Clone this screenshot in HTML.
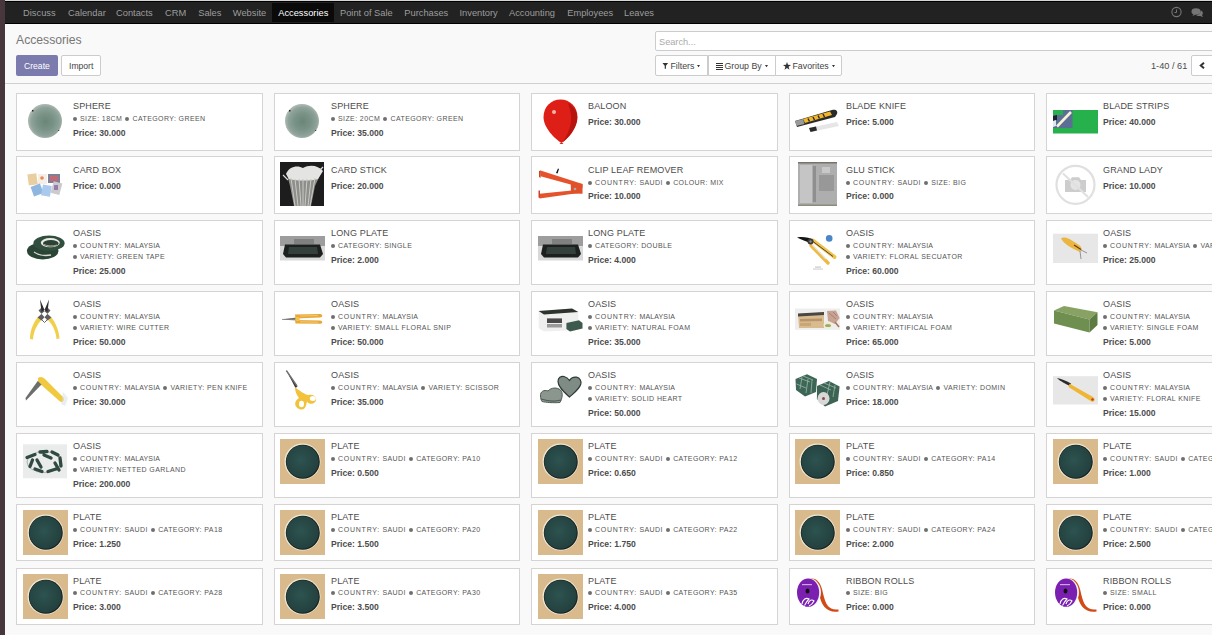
<!DOCTYPE html><html><head><meta charset="utf-8"><style>
*{margin:0;padding:0;box-sizing:border-box}
html,body{width:1212px;height:635px;overflow:hidden;background:#f9f9f9;font-family:"Liberation Sans", sans-serif;position:relative}
.a{position:absolute;white-space:nowrap}
.nav{position:absolute;left:5px;top:1px;width:1207px;height:23px;background:#222;border-top:1px solid #000;border-bottom:1px solid #000}
.ni{position:absolute;top:7px;font-size:9.3px;line-height:12px;color:#9d9d9d}
.card{position:absolute;background:#fff;border:1px solid #d6d3d4}
.nm{font-size:9px;color:#4c4c4c;line-height:10px;letter-spacing:0.15px}
.at{font-size:7px;color:#555;line-height:11px;letter-spacing:0.4px}
.pr{font-size:8.6px;color:#4c4c4c;font-weight:bold;line-height:10px}
.im{position:absolute;width:45px;height:45px}
.b{display:inline-block;width:4px;height:4px;border-radius:50%;background:#6f6f6f;margin:0 3px 0 0;vertical-align:0.5px}
.b:not(:first-child){margin-left:1px}
.cw{letter-spacing:0.75px}
.mn{letter-spacing:0.15px}
.im svg{display:block}
</style></head><body>
<div class="a" style="left:0;top:0;width:1212px;height:1px;background:#d6d6d6"></div>
<div class="a" style="left:0;top:0;width:5px;height:635px;background:#47363b"></div>
<div class="nav"></div>
<div class="a ni" style="left:23.1px">Discuss</div>
<div class="a ni" style="left:68px">Calendar</div>
<div class="a ni" style="left:116px">Contacts</div>
<div class="a ni" style="left:165px">CRM</div>
<div class="a ni" style="left:198.2px">Sales</div>
<div class="a ni" style="left:232.8px">Website</div>
<div class="a" style="left:272px;top:3px;width:62px;height:19px;background:#0a0a0a"></div>
<div class="a ni" style="left:278.2px;color:#fff">Accessories</div>
<div class="a ni" style="left:340px">Point of Sale</div>
<div class="a ni" style="left:404.3px">Purchases</div>
<div class="a ni" style="left:459.5px">Inventory</div>
<div class="a ni" style="left:509px">Accounting</div>
<div class="a ni" style="left:567.2px">Employees</div>
<div class="a ni" style="left:624px">Leaves</div>
<svg class="a" style="left:1170px;top:6px" width="13" height="13" viewBox="0 0 13 13"><circle cx="6.5" cy="6" r="4.6" fill="none" stroke="#767676" stroke-width="1.1"/><path d="M6.5 3.5 L6.5 6.5 L4.5 6.5" stroke="#767676" stroke-width="1" fill="none"/></svg>
<svg class="a" style="left:1190px;top:6px" width="15" height="13" viewBox="0 0 15 13"><ellipse cx="6" cy="5.5" rx="4.5" ry="3.3" fill="#767676"/><path d="M3.5 8 L2.5 10 L6 8.5Z" fill="#767676"/><path d="M10.5 4.5 C13 5 13.5 7.5 12 9 L13 11 L10 10 C8 10.3 6.5 9.5 6 9 C9 9 11 7 10.5 4.5Z" fill="#767676"/></svg>
<div class="a" style="left:16px;top:33px;font-size:12.2px;line-height:14px;color:#777">Accessories</div>
<div class="a" style="left:16px;top:55px;width:42px;height:21px;background:#7c7bad;border-radius:2px"></div>
<div class="a" style="left:24px;top:61px;font-size:8.6px;line-height:11px;color:#fff">Create</div>
<div class="a" style="left:61px;top:55px;width:40px;height:21px;background:#fff;border:1px solid #ccc;border-radius:2px"></div>
<div class="a" style="left:69px;top:61px;font-size:8.6px;line-height:11px;color:#444">Import</div>
<div class="a" style="left:5px;top:83px;width:1207px;height:1px;background:#d0d0d0"></div>
<div class="a" style="left:655px;top:31px;width:600px;height:20px;background:#fff;border:1px solid #ccc;border-radius:2px"></div>
<div class="a" style="left:659px;top:37px;font-size:9.2px;line-height:10px;color:#aaa">Search...</div>
<div class="a" style="left:655px;top:55px;width:53px;height:21px;background:#fff;border:1px solid #ccc;border-radius:2px 0 0 2px"></div>
<div class="a" style="left:708px;top:55px;width:68px;height:21px;background:#fff;border:1px solid #ccc"></div>
<div class="a" style="left:775px;top:55px;width:67px;height:21px;background:#fff;border:1px solid #ccc;border-radius:0 2px 2px 0"></div>
<svg class="a" style="left:662px;top:63px" width="7" height="7" viewBox="0 0 7 8"><path d="M0 0 L6.5 0 L4 3 L4 6.5 L2.6 6.5 L2.6 3Z" fill="#333"/></svg>
<div class="a" style="left:670.5px;top:61px;font-size:8.8px;line-height:11px;color:#444">Filters</div>
<svg class="a" style="left:696.5px;top:65px" width="3" height="2.5" viewBox="0 0 3 2.5"><path d="M0 0 L3 0 L1.5 2.2Z" fill="#333"/></svg>
<svg class="a" style="left:716px;top:63px" width="7" height="7" viewBox="0 0 7 7"><rect x="0" y="0" width="7" height="1" fill="#333"/><rect x="0" y="2" width="7" height="1" fill="#333"/><rect x="0" y="4" width="7" height="1" fill="#333"/><rect x="0" y="6" width="7" height="1" fill="#333"/></svg>
<div class="a" style="left:724.5px;top:61px;font-size:8.8px;line-height:11px;color:#444">Group By</div>
<svg class="a" style="left:765px;top:65px" width="3" height="2.5" viewBox="0 0 3 2.5"><path d="M0 0 L3 0 L1.5 2.2Z" fill="#333"/></svg>
<svg class="a" style="left:783px;top:62px" width="8" height="8" viewBox="0 0 8 8"><path d="M4 0 L5 2.8 L8 2.9 L5.6 4.8 L6.5 7.8 L4 6 L1.5 7.8 L2.4 4.8 L0 2.9 L3 2.8Z" fill="#333"/></svg>
<div class="a" style="left:792.5px;top:61px;font-size:8.8px;line-height:11px;color:#444">Favorites</div>
<svg class="a" style="left:831.5px;top:65px" width="3" height="2.5" viewBox="0 0 3 2.5"><path d="M0 0 L3 0 L1.5 2.2Z" fill="#333"/></svg>
<div class="a" style="left:1151px;top:61px;font-size:9.2px;line-height:11px;color:#4c4c4c">1-40 / 61</div>
<div class="a" style="left:1191px;top:55px;width:40px;height:21px;background:#fff;border:1px solid #ccc;border-radius:2px"></div>
<svg class="a" style="left:1199px;top:62px" width="6" height="7" viewBox="0 0 6 7"><path d="M5 0.8 L1.8 3.5 L5 6.2" stroke="#333" stroke-width="2" fill="none"/></svg>
<div class="card" style="left:16px;top:93px;width:247px;height:58px"></div>
<div class="im" style="left:23px;top:99px"><svg width="45" height="45" viewBox="0 0 45 45"><defs><radialGradient id="gs" cx="52%" cy="52%" r="50%"><stop offset="0" stop-color="#6b8679"/><stop offset="0.5" stop-color="#7a9388"/><stop offset="0.85" stop-color="#8fa39a"/><stop offset="1" stop-color="#a9b7b0"/></radialGradient></defs><circle cx="22" cy="22" r="17" fill="url(#gs)"/><rect x="9" y="11" width="1.5" height="1.5" fill="#222"/><rect x="35" y="31" width="1.2" height="1" fill="#444"/></svg></div>
<div class="a nm" style="left:73px;top:101px">SPHERE</div>
<div class="a at" style="left:73px;top:113px"><i class="b"></i>SIZE: 18CM <i class="b"></i>CATEGORY: GREEN</div>
<div class="a pr" style="left:73px;top:127.5px">Price: 30.000</div>
<div class="card" style="left:274px;top:93px;width:246px;height:58px"></div>
<div class="im" style="left:280px;top:99px"><svg width="45" height="45" viewBox="0 0 45 45"><defs><radialGradient id="gs" cx="52%" cy="52%" r="50%"><stop offset="0" stop-color="#6b8679"/><stop offset="0.5" stop-color="#7a9388"/><stop offset="0.85" stop-color="#8fa39a"/><stop offset="1" stop-color="#a9b7b0"/></radialGradient></defs><circle cx="22" cy="22" r="17" fill="url(#gs)"/><rect x="9" y="11" width="1.5" height="1.5" fill="#222"/><rect x="35" y="31" width="1.2" height="1" fill="#444"/></svg></div>
<div class="a nm" style="left:331px;top:101px">SPHERE</div>
<div class="a at" style="left:331px;top:113px"><i class="b"></i>SIZE: 20CM <i class="b"></i>CATEGORY: GREEN</div>
<div class="a pr" style="left:331px;top:127.5px">Price: 35.000</div>
<div class="card" style="left:531px;top:93px;width:247px;height:58px"></div>
<div class="im" style="left:538px;top:99px"><svg width="45" height="45" viewBox="0 0 45 45"><path d="M22.5 0.5 C32 0.5 39.5 8 39.5 18 C39.5 29 30 40 23.5 44 C17 40 5.5 29 5.5 18 C5.5 8 13 0.5 22.5 0.5Z" fill="#dd1f17"/><path d="M30 4 C37 8 40 14 39 22 C37 31 30 39 25 43 C30 35 34 26 33 16 C32 10 31 7 30 4Z" fill="#b8140e"/><circle cx="16" cy="13" r="2" fill="#f3b5a8"/><path d="M21.5 44 L25.5 44 L23.5 46Z" fill="#d2261a"/></svg></div>
<div class="a nm" style="left:588px;top:101px">BALOON</div>
<div class="a pr" style="left:588px;top:117.0px">Price: 30.000</div>
<div class="card" style="left:789px;top:93px;width:246px;height:58px"></div>
<div class="im" style="left:795px;top:99px"><svg width="45" height="45" viewBox="0 0 45 45"><path d="M0 22 L37 11 C41 10 43 12 42 15 L40 18 L2 28 Z" fill="#2a2a2a"/><path d="M8 20 L35 12.5 L37 16 L10 24Z" fill="#f0b62c"/><path d="M13 19.5 L14.5 22.5 M18 18 L19.5 21 M23 16.5 L24.5 19.5 M28 15 L29.5 18" stroke="#2a2a2a" stroke-width="1.4"/><path d="M0 22 L8 20 L9.5 25 L1.5 27Z" fill="#9a9a9a"/><path d="M14 29 L42 23 L44 27 L16 33Z" fill="#e6e6e6"/><path d="M14 29 L21 27.5 L22 31.5 L15.5 33Z" fill="#2a2a2a"/></svg></div>
<div class="a nm" style="left:846px;top:101px">BLADE KNIFE</div>
<div class="a pr" style="left:846px;top:117.0px">Price: 5.000</div>
<div class="card" style="left:1046px;top:93px;width:247px;height:58px"></div>
<div class="im" style="left:1053px;top:99px"><svg width="45" height="45" viewBox="0 0 45 45"><rect x="0" y="11" width="45" height="23.5" fill="#26b14c"/><rect x="10" y="11" width="9.5" height="18" fill="#5b6f95"/><rect x="0" y="16" width="10" height="13" fill="#5b6f95"/><path d="M4 27.5 L18 13" stroke="#f7f1d8" stroke-width="2.6"/><path d="M0 17 L4 16 L4 21 L0 22Z" fill="#1a2230"/><path d="M0 22 L3 21 L3 27 L0 28Z" fill="#dfe6ef"/></svg></div>
<div class="a nm" style="left:1103px;top:101px">BLADE STRIPS</div>
<div class="a pr" style="left:1103px;top:117.0px">Price: 40.000</div>
<div class="card" style="left:16px;top:156px;width:247px;height:58px"></div>
<div class="im" style="left:23px;top:162px"><svg width="45" height="45" viewBox="0 0 45 45"><rect x="5" y="12" width="9" height="11" fill="#e9cf9f" transform="rotate(-8 9 17)"/><rect x="15" y="12" width="9" height="10" fill="#f4ede8"/><circle cx="19" cy="16" r="1.8" fill="#e88a4a"/><rect x="25" y="12" width="12" height="9" fill="#7f8098"/><rect x="27" y="14" width="8" height="5" fill="#c06a78"/><rect x="9" y="23" width="10" height="10" fill="#8fb6e0" transform="rotate(-20 14 28)"/><rect x="19" y="23" width="9" height="11" fill="#a9c9ee" transform="rotate(10 23 28)"/><rect x="29" y="20" width="9" height="12" fill="#cacacf" transform="rotate(15 33 26)"/><rect x="31" y="23" width="4" height="5" fill="#9a7aa8"/></svg></div>
<div class="a nm" style="left:73px;top:165px">CARD BOX</div>
<div class="a pr" style="left:73px;top:180.5px">Price: 0.000</div>
<div class="card" style="left:274px;top:156px;width:246px;height:58px"></div>
<div class="im" style="left:280px;top:162px"><svg width="45" height="45" viewBox="0 0 45 45"><rect x="0" y="0" width="44" height="44" fill="#1c1d1c"/><path d="M7 12 L42 9 L35 24 L31 44 L14 44 L10 24Z" fill="#8e8e8a"/><path d="M6 12 C9 4 18 3 23 6 C30 2 39 4 43 9 L38 17 C30 19 18 19 9 17Z" fill="#e4e4e2"/><path d="M11 16 L15 44 M15 17 L18 44 M19 17 L21 44 M23 17 L23 44 M27 17 L25 44 M31 17 L28 44 M35 16 L30 44" stroke="#c9c9c5" stroke-width="1"/><path d="M3 13 L8 18 M40 8 L43 5" stroke="#ddd" stroke-width="1.2"/></svg></div>
<div class="a nm" style="left:331px;top:165px">CARD STICK</div>
<div class="a pr" style="left:331px;top:180.5px">Price: 20.000</div>
<div class="card" style="left:531px;top:156px;width:247px;height:58px"></div>
<div class="im" style="left:538px;top:162px"><svg width="45" height="45" viewBox="0 0 45 45"><path d="M2.5 8.6 L44.5 21.9 L44.5 26 L32.7 22.4 L2.5 14.3Z" fill="#e4532c"/><path d="M1.5 31.8 L33.6 28.5 L44 30.4 L1.5 36.5Z" fill="#e4532c"/><path d="M32.7 20.5 L44.5 22 L44.5 31.8 L33 31.5Z" fill="#e0502a"/><path d="M1 9 L2.8 8.6 L2.5 16 L1 15Z M0.5 28.5 L2 28.5 L2 36 L0.5 35.5Z" fill="#c84424"/><path d="M18 11 L20 6.5 L21 7 L19.5 11.5Z" fill="#111"/><circle cx="37" cy="27" r="1.3" fill="#aaa"/></svg></div>
<div class="a nm" style="left:588px;top:165px">CLIP LEAF REMOVER</div>
<div class="a at" style="left:588px;top:177px"><i class="b"></i><span class="cw">COUNTRY:</span> SAUDI <i class="b"></i>COLOUR: MIX</div>
<div class="a pr" style="left:588px;top:190.5px">Price: 10.000</div>
<div class="card" style="left:789px;top:156px;width:246px;height:58px"></div>
<div class="im" style="left:795px;top:162px"><svg width="45" height="45" viewBox="0 0 45 45"><rect x="3" y="0" width="39" height="44" fill="#aeaeae"/><rect x="5" y="3" width="12" height="38" fill="#c4c5c4"/><rect x="18" y="4" width="3" height="36" fill="#8e8f8e"/><rect x="24" y="13" width="15" height="16" fill="#979897"/><rect x="27" y="5" width="8" height="6" fill="#c8c8c8"/><rect x="3" y="0" width="39" height="1.5" fill="#7a7268"/><rect x="3" y="42.5" width="39" height="1.5" fill="#8a8c7c"/></svg></div>
<div class="a nm" style="left:846px;top:165px">GLU STICK</div>
<div class="a at" style="left:846px;top:177px"><i class="b"></i><span class="cw">COUNTRY:</span> SAUDI <i class="b"></i>SIZE: BIG</div>
<div class="a pr" style="left:846px;top:190.5px">Price: 0.000</div>
<div class="card" style="left:1046px;top:156px;width:247px;height:58px"></div>
<div class="im" style="left:1053px;top:162px"><svg width="45" height="45" viewBox="0 0 45 45"><circle cx="22.5" cy="22.8" r="19" fill="none" stroke="#e0e0e0" stroke-width="2.2"/><path d="M12 18 L17 18 L19 15.3 L26 15.3 L28 18 L33 18 L33 30 L12 30Z" fill="#cdcdcd"/><circle cx="22.5" cy="23" r="5" fill="#e4e4e4"/><path d="M10 11.5 L35 35" stroke="#e0e0e0" stroke-width="2.2"/></svg></div>
<div class="a nm" style="left:1103px;top:165px">GRAND LADY</div>
<div class="a pr" style="left:1103px;top:180.5px">Price: 10.000</div>
<div class="card" style="left:16px;top:220px;width:247px;height:65px"></div>
<div class="im" style="left:23px;top:226px"><svg width="45" height="45" viewBox="0 0 45 45"><ellipse cx="19.7" cy="25" rx="15.8" ry="8.5" fill="#2a4536"/><path d="M11 26 C15 29 22 30 28 29" stroke="#d8d8cc" stroke-width="1.3" fill="none"/><ellipse cx="26" cy="17.2" rx="15.6" ry="7.6" fill="#314e3f"/><ellipse cx="27.3" cy="16.7" rx="9.5" ry="4.6" fill="#ecece6"/><ellipse cx="27.8" cy="17.4" rx="7.8" ry="3.3" fill="#2b4236"/><path d="M21 18.5 C24 20 30 20.5 34 19" stroke="#c9c0a8" stroke-width="0.8" fill="none"/></svg></div>
<div class="a nm" style="left:73px;top:228px">OASIS</div>
<div class="a at" style="left:73px;top:240px"><i class="b"></i><span class="cw">COUNTRY:</span> <span class="mn">MALAYSIA</span></div>
<div class="a at" style="left:73px;top:251px"><i class="b"></i>VARIETY: GREEN TAPE</div>
<div class="a pr" style="left:73px;top:265.5px">Price: 25.000</div>
<div class="card" style="left:274px;top:220px;width:246px;height:65px"></div>
<div class="im" style="left:280px;top:226px"><svg width="45" height="45" viewBox="0 0 45 45"><rect x="0" y="10" width="45" height="24.5" fill="#d9d9d9"/><rect x="0" y="10" width="45" height="10" fill="#9d9d9d"/><rect x="14" y="13" width="20" height="5" fill="#808080"/><path d="M5 18.5 L40 18.5 L43 28 L40 31.5 L6 31.5 L3 28Z" fill="#1c201e"/><path d="M9 21 L37 21 L38 28 L8 28Z" fill="#34403c"/></svg></div>
<div class="a nm" style="left:331px;top:228px">LONG PLATE</div>
<div class="a at" style="left:331px;top:240px"><i class="b"></i>CATEGORY: SINGLE</div>
<div class="a pr" style="left:331px;top:254.5px">Price: 2.000</div>
<div class="card" style="left:531px;top:220px;width:247px;height:65px"></div>
<div class="im" style="left:538px;top:226px"><svg width="45" height="45" viewBox="0 0 45 45"><rect x="0" y="10" width="45" height="24.5" fill="#d9d9d9"/><rect x="0" y="10" width="45" height="10" fill="#9d9d9d"/><rect x="14" y="13" width="20" height="5" fill="#808080"/><path d="M5 18.5 L40 18.5 L43 28 L40 31.5 L6 31.5 L3 28Z" fill="#1c201e"/><path d="M9 21 L37 21 L38 28 L8 28Z" fill="#34403c"/></svg></div>
<div class="a nm" style="left:588px;top:228px">LONG PLATE</div>
<div class="a at" style="left:588px;top:240px"><i class="b"></i>CATEGORY: DOUBLE</div>
<div class="a pr" style="left:588px;top:254.5px">Price: 4.000</div>
<div class="card" style="left:789px;top:220px;width:246px;height:65px"></div>
<div class="im" style="left:795px;top:226px"><svg width="45" height="45" viewBox="0 0 45 45"><path d="M2 11.5 C8 10.5 14 11.5 19 14 L17 17.5 C11 15.5 6 13.5 2 11.5Z" fill="#161616"/><path d="M18 14.5 L39.5 31" stroke="#f1c24a" stroke-width="3.8" stroke-linecap="round"/><path d="M18 15.5 L38 30.5" stroke="#3a3a3a" stroke-width="0.9"/><path d="M16 19.5 L33 37" stroke="#eeba44" stroke-width="3.4" stroke-linecap="round"/><path d="M17.5 19 L31 33" stroke="#e6e6e6" stroke-width="1.2"/><circle cx="15.5" cy="15.5" r="3" fill="#3a3a3a"/><circle cx="15.5" cy="15.5" r="1.2" fill="#888"/><circle cx="34.2" cy="12.4" r="3.3" fill="#4a86c8"/><rect x="20" y="40.5" width="6" height="1.2" fill="#c8c8c8"/><rect x="18" y="42.5" width="10" height="1.2" fill="#d4d4d4"/></svg></div>
<div class="a nm" style="left:846px;top:228px">OASIS</div>
<div class="a at" style="left:846px;top:240px"><i class="b"></i><span class="cw">COUNTRY:</span> <span class="mn">MALAYSIA</span></div>
<div class="a at" style="left:846px;top:251px"><i class="b"></i>VARIETY: FLORAL SECUATOR</div>
<div class="a pr" style="left:846px;top:265.5px">Price: 60.000</div>
<div class="card" style="left:1046px;top:220px;width:247px;height:65px"></div>
<div class="im" style="left:1053px;top:226px"><svg width="45" height="45" viewBox="0 0 45 45"><rect x="0" y="7.7" width="45" height="29.3" fill="#e7e7e7"/><path d="M8 12.5 C11 10 16 12 26 19 C30 22 29 26 26 25.5 C19 22.5 11 18 8 12.5Z" fill="#eab540"/><path d="M21 19 L28 23.5" stroke="#6a3a1a" stroke-width="1.2"/><path d="M28 24 L34 27 M27 25 L28 33" stroke="#8a8a8a" stroke-width="0.9"/></svg></div>
<div class="a nm" style="left:1103px;top:228px">OASIS</div>
<div class="a at" style="left:1103px;top:240px"><i class="b"></i><span class="cw">COUNTRY:</span> <span class="mn">MALAYSIA</span> <i class="b"></i>VARIETY: FLORAL</div>
<div class="a pr" style="left:1103px;top:254.5px">Price: 25.000</div>
<div class="card" style="left:16px;top:291px;width:247px;height:65px"></div>
<div class="im" style="left:23px;top:297px"><svg width="45" height="45" viewBox="0 0 45 45"><path d="M15 20 C10 26 7 34 7 42 L10 42.5 C10.5 35 13.5 28 18.5 23Z" fill="#f2cf4a"/><path d="M28 20 C33 26 36 34 36.5 41.5 L33.5 42 C33 35 30 28 25 23Z" fill="#f2cf4a"/><path d="M14.5 20.5 L25 11 L27.5 13.5 L18.5 23.5Z M28.5 20.5 L18 11 L15.5 13.5 L24.5 23.5Z" fill="#5e5e5e"/><path d="M17 2.5 L21.5 13 L18.5 15Z M26 2.5 L21.5 13 L24.5 15Z" fill="#2e2e2e"/><path d="M18.5 22.5 L21.5 25.5 L24.5 22.5" stroke="#555" stroke-width="0.9" fill="none"/></svg></div>
<div class="a nm" style="left:73px;top:299px">OASIS</div>
<div class="a at" style="left:73px;top:311px"><i class="b"></i><span class="cw">COUNTRY:</span> <span class="mn">MALAYSIA</span></div>
<div class="a at" style="left:73px;top:322px"><i class="b"></i>VARIETY: WIRE CUTTER</div>
<div class="a pr" style="left:73px;top:336.5px">Price: 50.000</div>
<div class="card" style="left:274px;top:291px;width:246px;height:65px"></div>
<div class="im" style="left:280px;top:297px"><svg width="45" height="45" viewBox="0 0 45 45"><path d="M2 22.5 L16 20.5 L16 23.5Z" fill="#8a8a8a"/><path d="M2 22.5 L16 21.5" stroke="#555" stroke-width="0.6"/><path d="M15 17.5 L40 17 C43 17.2 43 20.3 40 20.5 L15.5 21.5Z" fill="#e9a73a"/><path d="M15 23 L40 23.5 C43 23.7 43 26.8 40 26.8 L15.5 26.5Z" fill="#e9a73a"/><path d="M20 19 L38 18.6 M20 24.8 L38 25.2" stroke="#f6d27a" stroke-width="0.8"/><circle cx="17.5" cy="22" r="2.3" fill="#f1c44a"/></svg></div>
<div class="a nm" style="left:331px;top:299px">OASIS</div>
<div class="a at" style="left:331px;top:311px"><i class="b"></i><span class="cw">COUNTRY:</span> <span class="mn">MALAYSIA</span></div>
<div class="a at" style="left:331px;top:322px"><i class="b"></i>VARIETY: SMALL FLORAL SNIP</div>
<div class="a pr" style="left:331px;top:336.5px">Price: 50.000</div>
<div class="card" style="left:531px;top:291px;width:247px;height:65px"></div>
<div class="im" style="left:538px;top:297px"><svg width="45" height="45" viewBox="0 0 45 45"><path d="M0.6 14 L34 11.5 L40.3 15 L40.3 33 L6 34.5 L0.6 31Z" fill="#efefef"/><path d="M0.6 14 L34 11.5 L40.3 15 L6 17.5Z" fill="#2c322e"/><rect x="9" y="21.4" width="15" height="4.6" fill="#4a4a4a"/><rect x="9" y="27" width="15" height="3.5" fill="#9a9a9a"/><path d="M28.4 26 L41 23.3 L44.5 26 L44.5 31.5 L32 34.5 L28.4 32Z" fill="#3e5a4e"/></svg></div>
<div class="a nm" style="left:588px;top:299px">OASIS</div>
<div class="a at" style="left:588px;top:311px"><i class="b"></i><span class="cw">COUNTRY:</span> <span class="mn">MALAYSIA</span></div>
<div class="a at" style="left:588px;top:322px"><i class="b"></i>VARIETY: NATURAL FOAM</div>
<div class="a pr" style="left:588px;top:336.5px">Price: 35.000</div>
<div class="card" style="left:789px;top:291px;width:246px;height:65px"></div>
<div class="im" style="left:795px;top:297px"><svg width="45" height="45" viewBox="0 0 45 45"><rect x="0" y="11.5" width="45" height="21.3" fill="#eeeeee"/><path d="M3 17 L29 15.5 L29 30.9 L4 31Z" fill="#d8bb8e"/><path d="M3 16.5 L29 15 L29 18 L3 19.5Z" fill="#4a4640"/><path d="M5 22 L27 21.5 L27 24 L5 24.5Z" fill="#b8956a"/><path d="M5 26 L16 25.8 L16 29 L5 29Z" fill="#c9a676"/><path d="M32 14 L41 13.4 L44.6 21 L40 27 L33 24Z" fill="#c8a292"/><path d="M34 16 L41 22 M38 15 L42 19" stroke="#a0786a" stroke-width="0.8"/><path d="M40 25 L44 30" stroke="#a87850" stroke-width="1.6"/><ellipse cx="33" cy="28" rx="4.5" ry="3.5" fill="#f0ecd8"/><ellipse cx="33" cy="28.5" rx="3" ry="1.6" fill="#9ab060"/></svg></div>
<div class="a nm" style="left:846px;top:299px">OASIS</div>
<div class="a at" style="left:846px;top:311px"><i class="b"></i><span class="cw">COUNTRY:</span> <span class="mn">MALAYSIA</span></div>
<div class="a at" style="left:846px;top:322px"><i class="b"></i>VARIETY: ARTIFICAL FOAM</div>
<div class="a pr" style="left:846px;top:336.5px">Price: 65.000</div>
<div class="card" style="left:1046px;top:291px;width:247px;height:65px"></div>
<div class="im" style="left:1053px;top:297px"><svg width="45" height="45" viewBox="0 0 45 45"><path d="M1 13.4 L11 9.1 L44.5 15.3 L36.5 22.4Z" fill="#87a262"/><path d="M1 13.4 L36.5 22.4 L36.5 35.6 L1 26.6Z" fill="#6f8f50"/><path d="M36.5 22.4 L44.5 15.3 L44.5 28 L36.5 35.6Z" fill="#5c7c42"/></svg></div>
<div class="a nm" style="left:1103px;top:299px">OASIS</div>
<div class="a at" style="left:1103px;top:311px"><i class="b"></i><span class="cw">COUNTRY:</span> <span class="mn">MALAYSIA</span></div>
<div class="a at" style="left:1103px;top:322px"><i class="b"></i>VARIETY: SINGLE FOAM</div>
<div class="a pr" style="left:1103px;top:336.5px">Price: 5.000</div>
<div class="card" style="left:16px;top:362px;width:247px;height:65px"></div>
<div class="im" style="left:23px;top:368px"><svg width="45" height="45" viewBox="0 0 45 45"><path d="M15 10 C17 8 20 9 22 11 L40 29 C42 32 40 35 37 33.5 L15 14Z" fill="#f0c940"/><path d="M14.7 13 L2.5 30 L3 32.5 L18.5 16.5Z" fill="#6b6e6b"/><path d="M40 24 L45 30 L42 38 L38 36Z" fill="#d4dee2" opacity="0.5"/></svg></div>
<div class="a nm" style="left:73px;top:370px">OASIS</div>
<div class="a at" style="left:73px;top:382px"><i class="b"></i><span class="cw">COUNTRY:</span> <span class="mn">MALAYSIA</span> <i class="b"></i>VARIETY: PEN KNIFE</div>
<div class="a pr" style="left:73px;top:396.5px">Price: 30.000</div>
<div class="card" style="left:274px;top:362px;width:246px;height:65px"></div>
<div class="im" style="left:280px;top:368px"><svg width="45" height="45" viewBox="0 0 45 45"><path d="M6.3 2.5 L17.5 18.5 L15.5 20Z" fill="#333"/><path d="M6.3 2.5 L17 18" stroke="#707070" stroke-width="1.4"/><path d="M15 19 C18 22 26 27 28 27 C36 25 39 33 33 35.5 C29 36.5 27 34.5 27 33 C26 39 25 43 19 41 C13 38 15 32 19 30 C16 26 15 23 15 19Z" fill="#f1c23a"/><ellipse cx="32.8" cy="30.5" rx="3" ry="2.5" fill="#fff"/><ellipse cx="21.5" cy="36" rx="2.5" ry="3.3" fill="#fff"/></svg></div>
<div class="a nm" style="left:331px;top:370px">OASIS</div>
<div class="a at" style="left:331px;top:382px"><i class="b"></i><span class="cw">COUNTRY:</span> <span class="mn">MALAYSIA</span> <i class="b"></i>VARIETY: SCISSOR</div>
<div class="a pr" style="left:331px;top:396.5px">Price: 35.000</div>
<div class="card" style="left:531px;top:362px;width:247px;height:65px"></div>
<div class="im" style="left:538px;top:368px"><svg width="45" height="45" viewBox="0 0 45 45"><path d="M31.5 29 C26 24 20 19 20 13.5 C20 9.5 23 8 26 8.5 C28.5 9 30.5 11 31.5 12.5 C33 10 35.5 8.8 38.5 9.2 C42 9.8 43.5 13 42.8 16 C41.5 21 36 25 31.5 29Z" fill="#7f8c86" stroke="#2f3a35" stroke-width="1.2"/><path d="M2.5 28 C2 23.5 6 21.5 10 23 C13 19.5 19 19 22.5 22 C25.5 25 24 31 22 34.5 C15 35 8 34.5 4 33.5 C3 32 2.6 30 2.5 28Z" fill="#8a968e" stroke="#4f5b55" stroke-width="1"/><path d="M3 31 C9 33 16 34 23 32" stroke="#4f5b55" stroke-width="1.2" fill="none"/></svg></div>
<div class="a nm" style="left:588px;top:370px">OASIS</div>
<div class="a at" style="left:588px;top:382px"><i class="b"></i><span class="cw">COUNTRY:</span> <span class="mn">MALAYSIA</span></div>
<div class="a at" style="left:588px;top:393px"><i class="b"></i>VARIETY: SOLID HEART</div>
<div class="a pr" style="left:588px;top:407.5px">Price: 50.000</div>
<div class="card" style="left:789px;top:362px;width:246px;height:65px"></div>
<div class="im" style="left:795px;top:368px"><svg width="45" height="45" viewBox="0 0 45 45"><path d="M0.5 11 L12 6.3 L22 11 L21 24 L10 28.5 L1 22Z" fill="#3e6656"/><path d="M4 10 L15 14 M8 8 L18 12 M1.5 16 L11 20 M7 9 L5 21 M13 11 L11 25 M17 12 L16 25" stroke="#8fb0a0" stroke-width="0.9"/><path d="M22 18 L34 12.9 L44.6 18.5 L43 33 L30 38.4 L21.9 31Z" fill="#3c6354"/><path d="M25 17 L36 22 M29 15 L41 20 M35 14 L32 27 M40 17 L38 29" stroke="#8fb0a0" stroke-width="0.9"/><ellipse cx="28.5" cy="30.5" rx="6" ry="6.5" fill="#d8d8d8"/><circle cx="28.5" cy="30.5" r="1.5" fill="#8a4a4a"/></svg></div>
<div class="a nm" style="left:846px;top:370px">OASIS</div>
<div class="a at" style="left:846px;top:382px"><i class="b"></i><span class="cw">COUNTRY:</span> <span class="mn">MALAYSIA</span> <i class="b"></i>VARIETY: DOMIN</div>
<div class="a pr" style="left:846px;top:396.5px">Price: 18.000</div>
<div class="card" style="left:1046px;top:362px;width:247px;height:65px"></div>
<div class="im" style="left:1053px;top:368px"><svg width="45" height="45" viewBox="0 0 45 45"><rect x="0" y="8.2" width="45" height="28.3" fill="#e7e7e7"/><path d="M3.9 10.1 C8 10.5 13 13 18 15.5 L17 18 C12 16 7 13 3.9 10.1Z" fill="#2c2c2c"/><path d="M16.6 15.7 L40 29 C43 31 41.5 34.5 38.5 33.5 L15.5 19Z" fill="#efb634"/><circle cx="39.5" cy="31.5" r="1.2" fill="#c0392b"/></svg></div>
<div class="a nm" style="left:1103px;top:370px">OASIS</div>
<div class="a at" style="left:1103px;top:382px"><i class="b"></i><span class="cw">COUNTRY:</span> <span class="mn">MALAYSIA</span></div>
<div class="a at" style="left:1103px;top:393px"><i class="b"></i>VARIETY: FLORAL KNIFE</div>
<div class="a pr" style="left:1103px;top:407.5px">Price: 15.000</div>
<div class="card" style="left:16px;top:433px;width:247px;height:65px"></div>
<div class="im" style="left:23px;top:439px"><svg width="45" height="45" viewBox="0 0 45 45"><rect x="0" y="5.3" width="44" height="34" fill="#eaebeb"/><ellipse cx="21" cy="23" rx="17" ry="10.5" fill="none" stroke="#9aa0a0" stroke-width="0.8"/><path d="M4 18.5 L12 15.5 M17 13 L24 12.5 M29 13 L35 16 M37 19 L38 27 M33 30 L25 32.5 M19 32.5 L12 30 M7 27.5 L9.5 21 M14 21 L18 28 M21 16 L28 19 M32 24 L36 31" stroke="#2f4a40" stroke-width="3.3" stroke-linecap="round"/></svg></div>
<div class="a nm" style="left:73px;top:441px">OASIS</div>
<div class="a at" style="left:73px;top:453px"><i class="b"></i><span class="cw">COUNTRY:</span> <span class="mn">MALAYSIA</span></div>
<div class="a at" style="left:73px;top:464px"><i class="b"></i>VARIETY: NETTED GARLAND</div>
<div class="a pr" style="left:73px;top:478.5px">Price: 200.000</div>
<div class="card" style="left:274px;top:433px;width:246px;height:65px"></div>
<div class="im" style="left:280px;top:439px"><svg width="45" height="45" viewBox="0 0 45 45"><defs><radialGradient id="pg" cx="45%" cy="45%" r="60%"><stop offset="0" stop-color="#2d5350"/><stop offset="1" stop-color="#223f3d"/></radialGradient></defs><rect x="0" y="0" width="45" height="45" fill="#d9ba8c"/><circle cx="22.5" cy="22.5" r="18" fill="#f2e8d4"/><circle cx="22.8" cy="22.8" r="17" fill="#16201f"/><circle cx="22.5" cy="22.5" r="16.2" fill="url(#pg)"/></svg></div>
<div class="a nm" style="left:331px;top:441px">PLATE</div>
<div class="a at" style="left:331px;top:453px"><i class="b"></i><span class="cw">COUNTRY:</span> SAUDI <i class="b"></i>CATEGORY: PA10</div>
<div class="a pr" style="left:331px;top:467.5px">Price: 0.500</div>
<div class="card" style="left:531px;top:433px;width:247px;height:65px"></div>
<div class="im" style="left:538px;top:439px"><svg width="45" height="45" viewBox="0 0 45 45"><defs><radialGradient id="pg" cx="45%" cy="45%" r="60%"><stop offset="0" stop-color="#2d5350"/><stop offset="1" stop-color="#223f3d"/></radialGradient></defs><rect x="0" y="0" width="45" height="45" fill="#d9ba8c"/><circle cx="22.5" cy="22.5" r="18" fill="#f2e8d4"/><circle cx="22.8" cy="22.8" r="17" fill="#16201f"/><circle cx="22.5" cy="22.5" r="16.2" fill="url(#pg)"/></svg></div>
<div class="a nm" style="left:588px;top:441px">PLATE</div>
<div class="a at" style="left:588px;top:453px"><i class="b"></i><span class="cw">COUNTRY:</span> SAUDI <i class="b"></i>CATEGORY: PA12</div>
<div class="a pr" style="left:588px;top:467.5px">Price: 0.650</div>
<div class="card" style="left:789px;top:433px;width:246px;height:65px"></div>
<div class="im" style="left:795px;top:439px"><svg width="45" height="45" viewBox="0 0 45 45"><defs><radialGradient id="pg" cx="45%" cy="45%" r="60%"><stop offset="0" stop-color="#2d5350"/><stop offset="1" stop-color="#223f3d"/></radialGradient></defs><rect x="0" y="0" width="45" height="45" fill="#d9ba8c"/><circle cx="22.5" cy="22.5" r="18" fill="#f2e8d4"/><circle cx="22.8" cy="22.8" r="17" fill="#16201f"/><circle cx="22.5" cy="22.5" r="16.2" fill="url(#pg)"/></svg></div>
<div class="a nm" style="left:846px;top:441px">PLATE</div>
<div class="a at" style="left:846px;top:453px"><i class="b"></i><span class="cw">COUNTRY:</span> SAUDI <i class="b"></i>CATEGORY: PA14</div>
<div class="a pr" style="left:846px;top:467.5px">Price: 0.850</div>
<div class="card" style="left:1046px;top:433px;width:247px;height:65px"></div>
<div class="im" style="left:1053px;top:439px"><svg width="45" height="45" viewBox="0 0 45 45"><defs><radialGradient id="pg" cx="45%" cy="45%" r="60%"><stop offset="0" stop-color="#2d5350"/><stop offset="1" stop-color="#223f3d"/></radialGradient></defs><rect x="0" y="0" width="45" height="45" fill="#d9ba8c"/><circle cx="22.5" cy="22.5" r="18" fill="#f2e8d4"/><circle cx="22.8" cy="22.8" r="17" fill="#16201f"/><circle cx="22.5" cy="22.5" r="16.2" fill="url(#pg)"/></svg></div>
<div class="a nm" style="left:1103px;top:441px">PLATE</div>
<div class="a at" style="left:1103px;top:453px"><i class="b"></i><span class="cw">COUNTRY:</span> SAUDI <i class="b"></i>CATEGORY: PA16</div>
<div class="a pr" style="left:1103px;top:467.5px">Price: 1.000</div>
<div class="card" style="left:16px;top:504px;width:247px;height:57px"></div>
<div class="im" style="left:23px;top:510px"><svg width="45" height="45" viewBox="0 0 45 45"><defs><radialGradient id="pg" cx="45%" cy="45%" r="60%"><stop offset="0" stop-color="#2d5350"/><stop offset="1" stop-color="#223f3d"/></radialGradient></defs><rect x="0" y="0" width="45" height="45" fill="#d9ba8c"/><circle cx="22.5" cy="22.5" r="18" fill="#f2e8d4"/><circle cx="22.8" cy="22.8" r="17" fill="#16201f"/><circle cx="22.5" cy="22.5" r="16.2" fill="url(#pg)"/></svg></div>
<div class="a nm" style="left:73px;top:512px">PLATE</div>
<div class="a at" style="left:73px;top:524px"><i class="b"></i><span class="cw">COUNTRY:</span> SAUDI <i class="b"></i>CATEGORY: PA18</div>
<div class="a pr" style="left:73px;top:538.5px">Price: 1.250</div>
<div class="card" style="left:274px;top:504px;width:246px;height:57px"></div>
<div class="im" style="left:280px;top:510px"><svg width="45" height="45" viewBox="0 0 45 45"><defs><radialGradient id="pg" cx="45%" cy="45%" r="60%"><stop offset="0" stop-color="#2d5350"/><stop offset="1" stop-color="#223f3d"/></radialGradient></defs><rect x="0" y="0" width="45" height="45" fill="#d9ba8c"/><circle cx="22.5" cy="22.5" r="18" fill="#f2e8d4"/><circle cx="22.8" cy="22.8" r="17" fill="#16201f"/><circle cx="22.5" cy="22.5" r="16.2" fill="url(#pg)"/></svg></div>
<div class="a nm" style="left:331px;top:512px">PLATE</div>
<div class="a at" style="left:331px;top:524px"><i class="b"></i><span class="cw">COUNTRY:</span> SAUDI <i class="b"></i>CATEGORY: PA20</div>
<div class="a pr" style="left:331px;top:538.5px">Price: 1.500</div>
<div class="card" style="left:531px;top:504px;width:247px;height:57px"></div>
<div class="im" style="left:538px;top:510px"><svg width="45" height="45" viewBox="0 0 45 45"><defs><radialGradient id="pg" cx="45%" cy="45%" r="60%"><stop offset="0" stop-color="#2d5350"/><stop offset="1" stop-color="#223f3d"/></radialGradient></defs><rect x="0" y="0" width="45" height="45" fill="#d9ba8c"/><circle cx="22.5" cy="22.5" r="18" fill="#f2e8d4"/><circle cx="22.8" cy="22.8" r="17" fill="#16201f"/><circle cx="22.5" cy="22.5" r="16.2" fill="url(#pg)"/></svg></div>
<div class="a nm" style="left:588px;top:512px">PLATE</div>
<div class="a at" style="left:588px;top:524px"><i class="b"></i><span class="cw">COUNTRY:</span> SAUDI <i class="b"></i>CATEGORY: PA22</div>
<div class="a pr" style="left:588px;top:538.5px">Price: 1.750</div>
<div class="card" style="left:789px;top:504px;width:246px;height:57px"></div>
<div class="im" style="left:795px;top:510px"><svg width="45" height="45" viewBox="0 0 45 45"><defs><radialGradient id="pg" cx="45%" cy="45%" r="60%"><stop offset="0" stop-color="#2d5350"/><stop offset="1" stop-color="#223f3d"/></radialGradient></defs><rect x="0" y="0" width="45" height="45" fill="#d9ba8c"/><circle cx="22.5" cy="22.5" r="18" fill="#f2e8d4"/><circle cx="22.8" cy="22.8" r="17" fill="#16201f"/><circle cx="22.5" cy="22.5" r="16.2" fill="url(#pg)"/></svg></div>
<div class="a nm" style="left:846px;top:512px">PLATE</div>
<div class="a at" style="left:846px;top:524px"><i class="b"></i><span class="cw">COUNTRY:</span> SAUDI <i class="b"></i>CATEGORY: PA24</div>
<div class="a pr" style="left:846px;top:538.5px">Price: 2.000</div>
<div class="card" style="left:1046px;top:504px;width:247px;height:57px"></div>
<div class="im" style="left:1053px;top:510px"><svg width="45" height="45" viewBox="0 0 45 45"><defs><radialGradient id="pg" cx="45%" cy="45%" r="60%"><stop offset="0" stop-color="#2d5350"/><stop offset="1" stop-color="#223f3d"/></radialGradient></defs><rect x="0" y="0" width="45" height="45" fill="#d9ba8c"/><circle cx="22.5" cy="22.5" r="18" fill="#f2e8d4"/><circle cx="22.8" cy="22.8" r="17" fill="#16201f"/><circle cx="22.5" cy="22.5" r="16.2" fill="url(#pg)"/></svg></div>
<div class="a nm" style="left:1103px;top:512px">PLATE</div>
<div class="a at" style="left:1103px;top:524px"><i class="b"></i><span class="cw">COUNTRY:</span> SAUDI <i class="b"></i>CATEGORY: PA26</div>
<div class="a pr" style="left:1103px;top:538.5px">Price: 2.500</div>
<div class="card" style="left:16px;top:568px;width:247px;height:57px"></div>
<div class="im" style="left:23px;top:574px"><svg width="45" height="45" viewBox="0 0 45 45"><defs><radialGradient id="pg" cx="45%" cy="45%" r="60%"><stop offset="0" stop-color="#2d5350"/><stop offset="1" stop-color="#223f3d"/></radialGradient></defs><rect x="0" y="0" width="45" height="45" fill="#d9ba8c"/><circle cx="22.5" cy="22.5" r="18" fill="#f2e8d4"/><circle cx="22.8" cy="22.8" r="17" fill="#16201f"/><circle cx="22.5" cy="22.5" r="16.2" fill="url(#pg)"/></svg></div>
<div class="a nm" style="left:73px;top:576px">PLATE</div>
<div class="a at" style="left:73px;top:587px"><i class="b"></i><span class="cw">COUNTRY:</span> SAUDI <i class="b"></i>CATEGORY: PA28</div>
<div class="a pr" style="left:73px;top:601.5px">Price: 3.000</div>
<div class="card" style="left:274px;top:568px;width:246px;height:57px"></div>
<div class="im" style="left:280px;top:574px"><svg width="45" height="45" viewBox="0 0 45 45"><defs><radialGradient id="pg" cx="45%" cy="45%" r="60%"><stop offset="0" stop-color="#2d5350"/><stop offset="1" stop-color="#223f3d"/></radialGradient></defs><rect x="0" y="0" width="45" height="45" fill="#d9ba8c"/><circle cx="22.5" cy="22.5" r="18" fill="#f2e8d4"/><circle cx="22.8" cy="22.8" r="17" fill="#16201f"/><circle cx="22.5" cy="22.5" r="16.2" fill="url(#pg)"/></svg></div>
<div class="a nm" style="left:331px;top:576px">PLATE</div>
<div class="a at" style="left:331px;top:587px"><i class="b"></i><span class="cw">COUNTRY:</span> SAUDI <i class="b"></i>CATEGORY: PA30</div>
<div class="a pr" style="left:331px;top:601.5px">Price: 3.500</div>
<div class="card" style="left:531px;top:568px;width:247px;height:57px"></div>
<div class="im" style="left:538px;top:574px"><svg width="45" height="45" viewBox="0 0 45 45"><defs><radialGradient id="pg" cx="45%" cy="45%" r="60%"><stop offset="0" stop-color="#2d5350"/><stop offset="1" stop-color="#223f3d"/></radialGradient></defs><rect x="0" y="0" width="45" height="45" fill="#d9ba8c"/><circle cx="22.5" cy="22.5" r="18" fill="#f2e8d4"/><circle cx="22.8" cy="22.8" r="17" fill="#16201f"/><circle cx="22.5" cy="22.5" r="16.2" fill="url(#pg)"/></svg></div>
<div class="a nm" style="left:588px;top:576px">PLATE</div>
<div class="a at" style="left:588px;top:587px"><i class="b"></i><span class="cw">COUNTRY:</span> SAUDI <i class="b"></i>CATEGORY: PA35</div>
<div class="a pr" style="left:588px;top:601.5px">Price: 4.000</div>
<div class="card" style="left:789px;top:568px;width:246px;height:57px"></div>
<div class="im" style="left:795px;top:574px"><svg width="45" height="45" viewBox="0 0 45 45"><path d="M16 4.4 C22 4 25.5 9 27 15 C29 23 30 29 34 33 C37 35.5 40 35.5 43.5 35.5 L43.5 37.5 C38 38.5 33 37 29.5 33 C26 29 24.5 22 23 15 C22 10 20 7 16 6.5Z" fill="#d24a16"/><path d="M23 10 C25 14 25.5 20 26 24" stroke="#a83a10" stroke-width="0.8" fill="none"/><ellipse cx="14" cy="18.6" rx="12" ry="14.4" fill="#f4f4f4"/><ellipse cx="13.1" cy="18.6" rx="11.1" ry="14.2" fill="#7a1fb0"/><ellipse cx="12.5" cy="17" rx="2" ry="2.6" fill="#111"/><path d="M7 30 C8 25 11 23.5 14 25 C12 27 11 29 9.5 31.5 M13 30 C14 26 17 25 19 27 C18 29 16 31 14 32" stroke="#fff" stroke-width="1.1" fill="none"/><rect x="7" y="10" width="10" height="1.2" fill="#c9a8e0"/></svg></div>
<div class="a nm" style="left:846px;top:576px">RIBBON ROLLS</div>
<div class="a at" style="left:846px;top:587px"><i class="b"></i>SIZE: BIG</div>
<div class="a pr" style="left:846px;top:601.5px">Price: 0.000</div>
<div class="card" style="left:1046px;top:568px;width:247px;height:57px"></div>
<div class="im" style="left:1053px;top:574px"><svg width="45" height="45" viewBox="0 0 45 45"><path d="M16 4.4 C22 4 25.5 9 27 15 C29 23 30 29 34 33 C37 35.5 40 35.5 43.5 35.5 L43.5 37.5 C38 38.5 33 37 29.5 33 C26 29 24.5 22 23 15 C22 10 20 7 16 6.5Z" fill="#d24a16"/><path d="M23 10 C25 14 25.5 20 26 24" stroke="#a83a10" stroke-width="0.8" fill="none"/><ellipse cx="14" cy="18.6" rx="12" ry="14.4" fill="#f4f4f4"/><ellipse cx="13.1" cy="18.6" rx="11.1" ry="14.2" fill="#7a1fb0"/><ellipse cx="12.5" cy="17" rx="2" ry="2.6" fill="#111"/><path d="M7 30 C8 25 11 23.5 14 25 C12 27 11 29 9.5 31.5 M13 30 C14 26 17 25 19 27 C18 29 16 31 14 32" stroke="#fff" stroke-width="1.1" fill="none"/><rect x="7" y="10" width="10" height="1.2" fill="#c9a8e0"/></svg></div>
<div class="a nm" style="left:1103px;top:576px">RIBBON ROLLS</div>
<div class="a at" style="left:1103px;top:587px"><i class="b"></i>SIZE: SMALL</div>
<div class="a pr" style="left:1103px;top:601.5px">Price: 0.000</div>
</body></html>
